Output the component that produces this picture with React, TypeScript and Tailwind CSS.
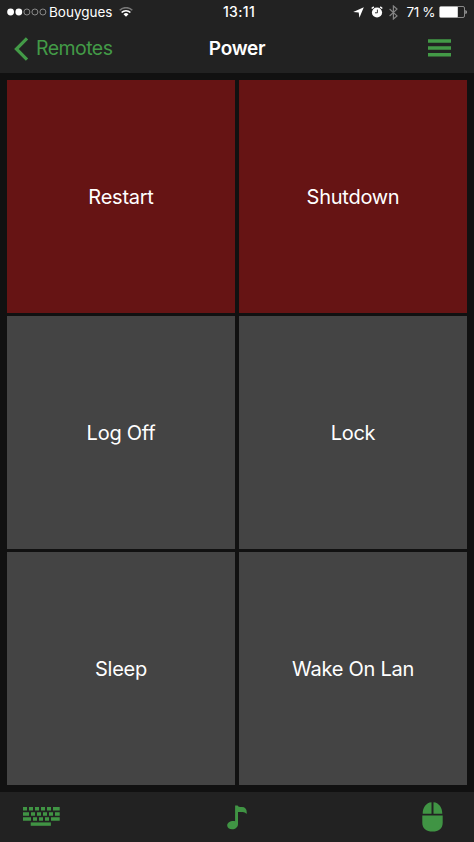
import { useState } from 'react';

type Action = {
  label: string;
  danger?: boolean;
};

const actions: Action[] = [
  { label: 'Restart', danger: true },
  { label: 'Shutdown', danger: true },
  { label: 'Log Off' },
  { label: 'Lock' },
  { label: 'Sleep' },
  { label: 'Wake On Lan' },
];

function SignalDots() {
  return (
    <svg width="40" height="8" viewBox="0 0 40 8" fill="none">
      <circle cx="3.6" cy="4" r="3.4" fill="#fff" />
      <circle cx="11.8" cy="4" r="3.4" fill="#fff" />
      <circle cx="19.9" cy="4" r="3" stroke="#a3a3a3" strokeWidth="0.8" />
      <circle cx="27.9" cy="4" r="3" stroke="#a3a3a3" strokeWidth="0.8" />
      <circle cx="35.9" cy="4" r="3" stroke="#a3a3a3" strokeWidth="0.8" />
    </svg>
  );
}

function WifiIcon() {
  return (
    <svg width="14" height="10" viewBox="0 0 14 10" fill="none">
      <path d="M0.7 3.2a9 9 0 0 1 12.6 0" stroke="#777" strokeWidth="1.5" />
      <path d="M2.6 5.5a6.3 6.3 0 0 1 8.8 0" stroke="#fff" strokeWidth="1.6" />
      <path d="M7 9.8 4.5 7.3a3.6 3.6 0 0 1 5 0z" fill="#fff" />
    </svg>
  );
}

function LocationIcon() {
  return (
    <svg width="11" height="11" viewBox="0 0 11 11" fill="#fff">
      <path d="M10.8 0.2 6.4 10.8 5.7 5.5 0.2 5z" />
    </svg>
  );
}

function AlarmIcon() {
  return (
    <svg width="12" height="12" viewBox="0 0 12 12" fill="none">
      <circle cx="6" cy="6.5" r="5.1" fill="#fff" />
      <path d="M0.7 2.5 2.8 0.8M11.3 2.5 9.2 0.8" stroke="#fff" strokeWidth="1.5" />
      <path d="M6.4 3.6v3.2H4" stroke="#222" strokeWidth="0.9" />
    </svg>
  );
}

function BluetoothIcon() {
  return (
    <svg width="9" height="15" viewBox="0 0 9 15" fill="none" stroke="#858585" strokeWidth="1.2">
      <path d="M0.6 4 8 10.9 4.4 14V1L8 4.1 0.6 11" />
    </svg>
  );
}

function BatteryIcon() {
  return (
    <svg width="29" height="12" viewBox="0 0 29 12" fill="none">
      <rect x="0.5" y="0.5" width="25" height="11" rx="1.5" stroke="#a3a3a3" strokeWidth="0.8" />
      <rect x="0.8" y="0.8" width="18" height="10.4" rx="0.8" fill="#fff" />
      <path d="M26.6 3.9c1.3.5 1.3 3.7 0 4.2z" fill="#fff" />
    </svg>
  );
}

function MenuIcon() {
  return (
    <svg width="23" height="18" viewBox="0 0 23 18" fill="#439a47">
      <path d="M0 .2h23v3.5H0zM0 7.2h23v3.5H0zM0 14.1h23v3.5H0z" />
    </svg>
  );
}

function KeyboardIcon() {
  return (
    <svg width="37" height="20" viewBox="0 0 37 20" fill="#409444">
      {/* top row */}
      <path d="M0 0h4v3.6H0zM6 0h4v3.6H6zM12 0h4v3.6h-4zM18 0h4v3.6h-4zM24 0h4v3.6h-4zM30 0h6.7v3.6H30z" />
      {/* middle row */}
      <path d="M0 5.2h6v3.5H0zM8 5.2h4v3.5H8zM14 5.2h4v3.5h-4zM20 5.2h4v3.5h-4zM26 5.2h4v3.5h-4zM32 5.2h4.7v3.5H32z" />
      {/* bottom row and space bar */}
      <path d="M0 10.3h8v3.5H0zM10 10.3h4v3.5h-4zM16 10.3h4v3.5h-4zM22 10.3h4v3.5h-4zM28 10.3h8.7v3.5H28z" />
      <path d="M7.7 15.4h20.2v3.4H7.7z" />
    </svg>
  );
}

function MusicIcon() {
  return (
    <svg width="20" height="25" viewBox="0 0 20 25" fill="#409444">
      <path d="M8.1.4h2.6c.3 1.2 1.6 1.5 4.4 1.5 3.3 0 5.2 2.6 4.5 7-1.2-1.7-3.6-2-8.6-2V19c0 3.2-2.6 5.3-5.8 5.3-3 0-5-1.4-5-3.7 0-2.8 3.2-5 7.9-4.4z" />
    </svg>
  );
}

function MouseIcon() {
  return (
    <svg width="21" height="30" viewBox="0 0 21 30" fill="#409444">
      <path d="M9.5.2v11.6H.7C.7 5.3 4.2.6 9.5.2zM11.5.2c5.3.4 8.8 5.1 8.8 11.6h-8.8z" />
      <path d="M.3 13.6h20.4v7.3c0 5.2-3.8 8.7-10.2 8.7S.3 26.1.3 20.9z" />
    </svg>
  );
}

export default function App() {
  const [active, setActive] = useState<string | null>(null);

  return (
    <div className="flex h-[842px] w-[474px] flex-col bg-[#111111] font-['Inter','Liberation_Sans',sans-serif] text-white">
      <header className="h-[73px] shrink-0 bg-[#222222]">
        {/* Status bar */}
        <div className="grid h-6 grid-cols-[1fr_auto_1fr] items-center pl-[7px] pr-[6px] text-[13.5px] leading-6">
          <div className="flex items-center">
            <SignalDots />
            <span className="ml-[2px] w-[64px] whitespace-nowrap">Bouygues</span>
            <span className="ml-[6px]">
              <WifiIcon />
            </span>
          </div>
          <span className="ml-[3px] text-[14px] font-medium tracking-[0.35px]">13:11</span>
          <div className="flex items-center justify-end">
            <LocationIcon />
            <span className="ml-[7px]">
              <AlarmIcon />
            </span>
            <span className="ml-[6px]">
              <BluetoothIcon />
            </span>
            <span className="ml-[8px] whitespace-nowrap tracking-[-0.4px]">71 %</span>
            <span className="ml-[4px]">
              <BatteryIcon />
            </span>
          </div>
        </div>

        {/* Navigation */}
        <nav className="grid h-[49px] grid-cols-[1fr_auto_1fr] items-center pl-[14px] pr-[23px]">
          <button className="flex items-center gap-[7px] text-[#439a47]">
            <svg width="15" height="24" viewBox="0 0 15 24" fill="none" stroke="currentColor" strokeWidth="3.2">
              <path d="M13 1.3 2.4 12 13 22.7" />
            </svg>
            <span className="text-[19.5px] tracking-[-0.55px]">Remotes</span>
          </button>
          <h1 className="ml-[9px] mt-0.5 text-[19px] font-semibold tracking-[-0.3px]">Power</h1>
          <button className="mb-0.5 justify-self-end" aria-label="Menu">
            <MenuIcon />
          </button>
        </nav>
      </header>

      <main className="grid flex-1 grid-cols-2 grid-rows-3 gap-x-1 gap-y-[3px] p-[7px]">
        {actions.map((action) => (
          <button
            key={action.label}
            onClick={() => setActive(action.label)}
            aria-pressed={active === action.label}
            className={`text-[20px] tracking-[-0.25px] ${action.danger ? 'bg-[#661414]' : 'bg-[#444444]'}`}
          >
            {action.label}
          </button>
        ))}
      </main>

      <footer className="grid h-[50px] shrink-0 grid-cols-3 items-center bg-[#222222] pl-[23px] pr-[31px]">
        <button className="justify-self-start" aria-label="Keyboard">
          <KeyboardIcon />
        </button>
        <button className="ml-2 mt-px justify-self-center" aria-label="Media">
          <MusicIcon />
        </button>
        <button className="justify-self-end" aria-label="Mouse">
          <MouseIcon />
        </button>
      </footer>
    </div>
  );
}
